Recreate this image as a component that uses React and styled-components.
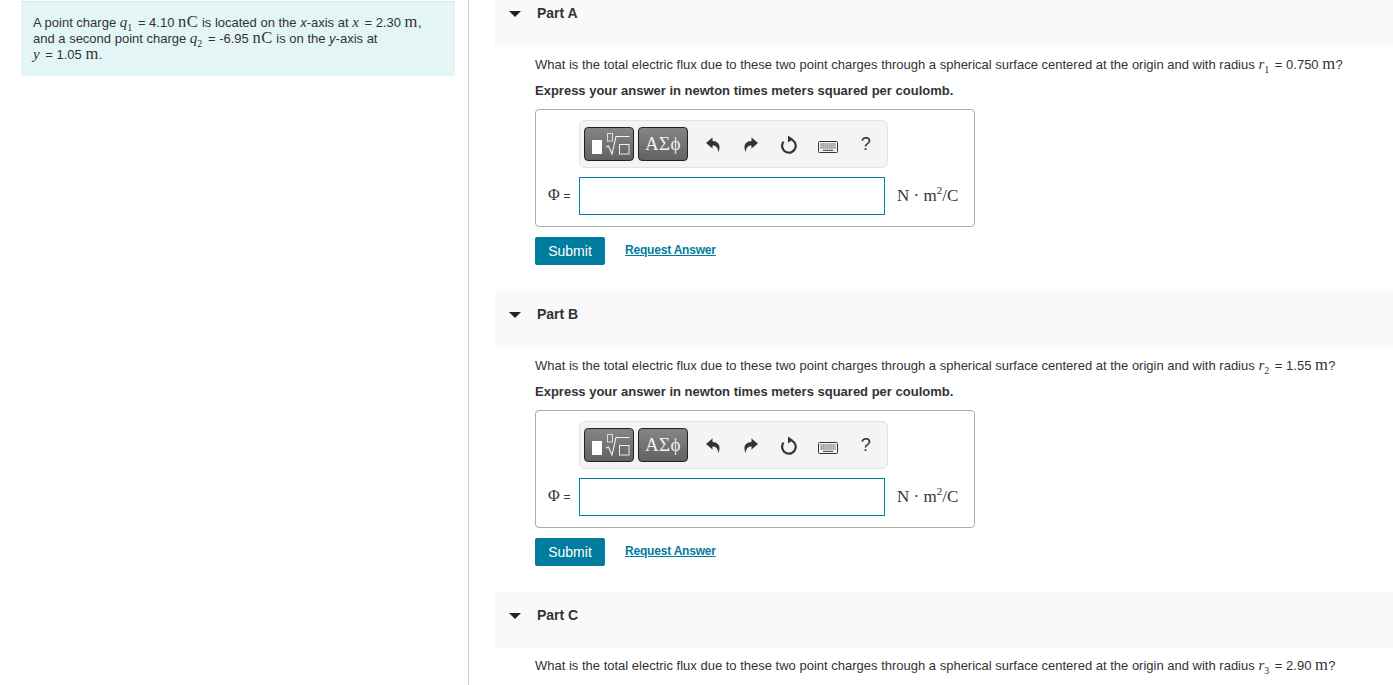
import styled, { createGlobalStyle } from "styled-components";

const GlobalStyle = createGlobalStyle`
  html, body {
    margin: 0;
    height: 100%;
    overflow: hidden;
    background: #fff;
    font-family: "Liberation Sans", Arial, sans-serif;
    color: #333;
  }
`;

const Page = styled.div`
  display: flex;
  width: 1393px;
  height: 685px;
  overflow: hidden;
`;

const Sidebar = styled.aside`
  width: 469px;
  flex: none;
  box-sizing: border-box;
  padding: 1px 13px 0 21px;
  border-right: 1px solid #bcd3e0;
`;

const InfoBox = styled.div`
  box-sizing: border-box;
  height: 75px;
  padding: 13px 12px 0 12px;
  background: #e4f5f6;
  border-top: 1px solid #d6e4e8;
  font-size: 13px;
  line-height: 16px;
  color: #333;
`;

const Main = styled.main`
  flex: 1;
  min-width: 0;
  padding-left: 26px;
  margin-top: -10px;
`;

const PartHeader = styled.div`
  display: flex;
  align-items: flex-start;
  box-sizing: border-box;
  height: ${(p) => p.$height}px;
  padding-top: 15px;
  background: #f9f9f9;
`;

const Caret = styled.span`
  width: 0;
  height: 0;
  margin: 6px 16px 0 14px;
  border-left: 6px solid transparent;
  border-right: 6px solid transparent;
  border-top: 6px solid #222;
`;

const PartTitle = styled.h3`
  margin: 0;
  font-size: 14px;
  line-height: 16px;
  font-weight: bold;
  color: #333;
`;

const PartBody = styled.section`
  padding: 10px 0 0 40px;
  height: ${(p) => p.$height}px;
  box-sizing: border-box;
`;

const Question = styled.p`
  margin: 0;
  font-size: 13px;
  line-height: 16px;
  white-space: nowrap;
`;

const Instruction = styled.p`
  margin: 10px 0;
  font-size: 13px;
  line-height: 16px;
  font-weight: bold;
`;

const AnswerBox = styled.div`
  box-sizing: border-box;
  width: 440px;
  height: 118px;
  padding: 10px 0 0 43px;
  border: 1px solid #ababab;
  border-radius: 4px;
`;

const Toolbar = styled.div`
  display: flex;
  align-items: center;
  box-sizing: border-box;
  width: 309px;
  height: 48px;
  padding-left: 4px;
  gap: 4px;
  background: #f4f4f4;
  border: 1px solid #e2e2e2;
  border-radius: 6px;
`;

const ToolButton = styled.div`
  display: flex;
  align-items: center;
  justify-content: center;
  box-sizing: border-box;
  width: 50px;
  height: 34px;
  border: 1px solid #222;
  border-radius: 4px;
  background: linear-gradient(#858585, #626262);
  color: #f0f0f0;
  font-family: "Liberation Serif", serif;
  font-size: 19px;
  letter-spacing: 0.4px;
`;

const IconGroup = styled.div`
  display: flex;
  align-items: center;
  margin-left: 1.5px;
`;

const IconSlot = styled.div`
  display: flex;
  align-items: center;
  justify-content: center;
  width: 38.3px;
  height: 34px;
  color: #333;
  font-size: 18px;
`;

const KeyboardSvg = styled.svg`
  margin-top: 5px;
`;

const InputRow = styled.div`
  display: flex;
  align-items: center;
  margin-top: 9px;
  margin-left: -32px;
`;

const SymbolLabel = styled.span`
  box-sizing: border-box;
  width: 32px;
  padding-left: 1px;
  font-size: 12px;
  color: #333;
`;

const AnswerInput = styled.input`
  box-sizing: border-box;
  width: 306px;
  height: 38px;
  padding: 0 6px;
  border: 1px solid #007c9e;
  border-radius: 0;
  outline: none;
  background: #fff;
`;

const Units = styled.span`
  margin-left: 12px;
  font-family: "Liberation Serif", serif;
  font-size: 17px;
  color: #333;
  white-space: nowrap;

  sup {
    font-size: 11px;
    line-height: 0;
  }
`;

const Actions = styled.div`
  display: flex;
  align-items: center;
  margin-top: 10px;
`;

const SubmitButton = styled.button`
  width: 70px;
  height: 28px;
  padding: 0;
  border: none;
  border-radius: 2px;
  background: #007c9e;
  color: #fff;
  font-family: inherit;
  font-size: 14px;
`;

const RequestLink = styled.a`
  margin: -3px 0 0 20px;
  font-size: 12px;
  letter-spacing: -0.2px;
  font-weight: bold;
  color: #007c9e;
  text-decoration: underline;
`;

const MathVar = styled.i`
  margin-right: 2px;
  font-family: "Liberation Serif", serif;
  font-size: 15px;
  line-height: 0;

  sub {
    font-style: normal;
    font-size: 10px;
    line-height: 0;
  }
`;

const MathUnit = styled.span`
  font-family: "Liberation Serif", serif;
  font-size: 16.5px;
  letter-spacing: 0.5px;
  line-height: 0;
`;

const PhiGlyph = styled(MathUnit)`
  font-size: 16px;
`;

const UndoIcon = ({ flip }) => (
  <svg width="14" height="15" viewBox="0 0 14 15" style={flip ? { transform: "scaleX(-1)" } : undefined}>
    <path
      d="M0 6 L6.5 0.5 V4 C11 4 14 7 13.5 11 C13.3 12.5 12.8 14 12 15 C12.2 11 10.5 8.5 6.5 8.5 V11.5 Z"
      fill="#333"
    />
  </svg>
);

const RedoIcon = () => <UndoIcon flip />;

const ResetIcon = () => (
  <svg width="18" height="19" viewBox="0 0 18 19">
    <path d="M9 4 A6.8 6.8 0 1 1 3.5 6.7" fill="none" stroke="#333" strokeWidth="2.2" />
    <path d="M8 0.5 L13 4 L8 7.5 Z" fill="#333" />
  </svg>
);

const KeyboardIcon = () => (
  <KeyboardSvg width="20" height="12" viewBox="0 0 20 12">
    <rect x="0.5" y="0.5" width="19" height="11" rx="1" fill="#f4f4f4" stroke="#333" />
    <path d="M2.5 3 H17.5 M2.5 5 H17.5 M2.5 7 H17.5" stroke="#666" strokeWidth="1.3" strokeDasharray="1.2 0.8" />
    <path d="M5 9.4 H15" stroke="#555" strokeWidth="1.2" />
  </KeyboardSvg>
);

const TemplateIcon = () => (
  <svg width="48" height="32" viewBox="0 0 48 32">
    <rect x="7" y="12" width="10" height="14" fill="#fff" />
    <rect x="34.5" y="16.5" width="9.5" height="9.5" fill="none" stroke="#eee" />
    <rect x="22.5" y="5.5" width="5" height="7.5" fill="none" stroke="#ddd" />
    <path d="M21 19 L23.5 18 L27 26 L31 8.5 H44.5" fill="none" stroke="#f2f2f2" strokeWidth="1.1" />
  </svg>
);

const Part = ({ title, headerHeight, bodyHeight, symbol, index, value, answer = true }) => (
  <>
    <PartHeader $height={headerHeight}>
      <Caret />
      <PartTitle>{title}</PartTitle>
    </PartHeader>
    <PartBody $height={bodyHeight}>
      <Question>
        What is the total electric flux due to these two point charges through a spherical surface centered at the
        origin and with radius{" "}
        <MathVar>
          {symbol}
          <sub>{index}</sub>
        </MathVar>{" "}
        = {value} <MathUnit>m</MathUnit>?
      </Question>
      {answer && (
        <>
          <Instruction>Express your answer in newton times meters squared per coulomb.</Instruction>
          <AnswerBox>
            <Toolbar>
              <ToolButton>
                <TemplateIcon />
              </ToolButton>
              <ToolButton>ΑΣϕ</ToolButton>
              <IconGroup>
                <IconSlot>
                  <UndoIcon />
                </IconSlot>
                <IconSlot>
                  <RedoIcon />
                </IconSlot>
                <IconSlot>
                  <ResetIcon />
                </IconSlot>
                <IconSlot>
                  <KeyboardIcon />
                </IconSlot>
                <IconSlot>?</IconSlot>
              </IconGroup>
            </Toolbar>
            <InputRow>
              <SymbolLabel>
                <PhiGlyph>Φ</PhiGlyph> =
              </SymbolLabel>
              <AnswerInput />
              <Units>
                N · m<sup>2</sup>/C
              </Units>
            </InputRow>
          </AnswerBox>
          <Actions>
            <SubmitButton>Submit</SubmitButton>
            <RequestLink href="#">Request Answer</RequestLink>
          </Actions>
        </>
      )}
    </PartBody>
  </>
);

const App = () => {
  return (
    <>
      <GlobalStyle />
      <Page>
        <Sidebar>
          <InfoBox>
            A point charge{" "}
            <MathVar>
              q<sub>1</sub>
            </MathVar>{" "}
            = 4.10 <MathUnit>nC</MathUnit> is located on the <i>x</i>-axis at <MathVar>x</MathVar> = 2.30{" "}
            <MathUnit>m</MathUnit>,
            <br />
            and a second point charge{" "}
            <MathVar>
              q<sub>2</sub>
            </MathVar>{" "}
            = -6.95 <MathUnit>nC</MathUnit> is on the <i>y</i>-axis at
            <br />
            <MathVar>y</MathVar> = 1.05 <MathUnit>m</MathUnit>.
          </InfoBox>
        </Sidebar>
        <Main>
          <Part title="Part A" headerHeight={57} bodyHeight={244} symbol="r" index="1" value="0.750" />
          <Part title="Part B" headerHeight={57} bodyHeight={244} symbol="r" index="2" value="1.55" />
          <Part title="Part C" headerHeight={56} bodyHeight={60} symbol="r" index="3" value="2.90" answer={false} />
        </Main>
      </Page>
    </>
  );
};

export default App;
